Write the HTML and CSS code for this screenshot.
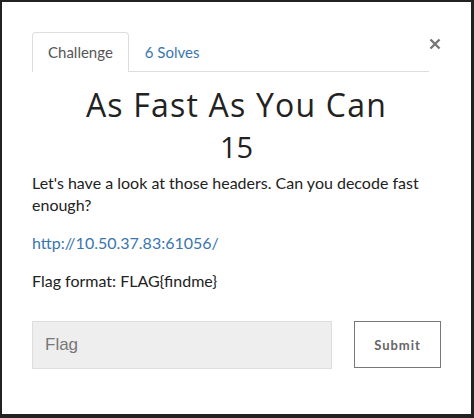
FILE: index.html
```html
<!DOCTYPE html>
<html>
<head>
<meta charset="utf-8">
<link rel="stylesheet" href="styles.css">
</head>
<body>
<div class="modal">
  <div class="header">
    <ul class="tabs">
      <li class="tab active">Challenge</li>
      <li class="tab"><a href="#">6 Solves</a></li>
    </ul>
    <button class="close" type="button" aria-label="Close">
      <svg width="12" height="12" viewBox="0 0 12 12"><path d="M1.5 1.5 L10.5 10.5 M10.5 1.5 L1.5 10.5" stroke="#777" stroke-width="2.4" stroke-linecap="butt" fill="none"/></svg>
    </button>
  </div>
  <h3 class="title">As Fast As You Can</h3>
  <h4 class="value">15</h4>
  <p class="desc">Let's have a look at those headers. Can you decode fast enough?</p>
  <p class="desc"><a href="#">http://10.50.37.83:61056/</a></p>
  <p class="desc">Flag format: FLAG{findme}</p>
  <form class="submit-row">
    <input class="flag-input" type="text" placeholder="Flag">
    <button class="submit" type="button">Submit</button>
  </form>
</div>
</body>
</html>
```
FILE: styles.css
```css
html, body {
  margin: 0;
  padding: 0;
  height: 100%;
}
body {
  background: #222;
  font-family: Lato, "Open Sans", sans-serif;
  color: #222;
}
.modal {
  background: #fff;
  margin: 2px 3px 0 2px;
  height: 412px;
  box-sizing: border-box;
  padding: 30px 30px 0 30px;
}
.header {
  display: flex;
  align-items: flex-start;
}
.tabs {
  flex: 1;
  list-style: none;
  margin: 0;
  padding: 0;
  display: flex;
  border-bottom: 1px solid #ddd;
}
.tab {
  font-size: 15px;
  line-height: 20px;
  padding: 9px 15px 9px 15px;
  border: 1px solid transparent;
  border-bottom: none;
  border-radius: 4px 4px 0 0;
  margin-bottom: -1px;
}
.tab.active {
  border-color: #ddd;
  background: #fff;
  color: #555;
  padding-bottom: 10px;
}
.tab a {
  color: #3a76ad;
  text-decoration: none;
}
.close {
  background: none;
  border: none;
  padding: 0;
  margin: 6px 0 0 0;
  width: 12px;
  height: 12px;
  display: flex;
}
.title {
  margin: 15px 0 0 0;
  text-align: center;
  font-family: "Open Sans", Lato, sans-serif;
  font-weight: 400;
  font-size: 32px;
  line-height: 36px;
  letter-spacing: 1.2px;
  color: #222;
}
.value {
  margin: 6px 0 0 0;
  text-align: center;
  font-family: "Open Sans", Lato, sans-serif;
  font-weight: 400;
  font-size: 29px;
  line-height: 36px;
  color: #222;
}
.desc {
  margin: 7px 0 16px 0;
  font-size: 16px;
  line-height: 22px;
  color: #222;
}
.desc + .desc {
  margin-top: 0;
}
.desc a {
  color: #3a76ad;
  text-decoration: none;
}
.submit-row {
  display: flex;
  justify-content: space-between;
  margin-top: 29px;
}
.flag-input {
  width: 300px;
  height: 48px;
  box-sizing: border-box;
  background: #eee;
  border: 1px solid #ddd;
  padding: 0 12px;
  font-family: "Liberation Sans", Arial, sans-serif;
  font-size: 17px;
  color: #555;
  margin: 0;
}
.flag-input::placeholder {
  color: #777;
}
.submit {
  width: 87px;
  height: 47px;
  box-sizing: border-box;
  background: #fff;
  border: 1px solid #777;
  font-family: Lato, sans-serif;
  font-weight: bold;
  font-size: 13px;
  letter-spacing: 1px;
  color: #666;
  margin: 0;
}
```
